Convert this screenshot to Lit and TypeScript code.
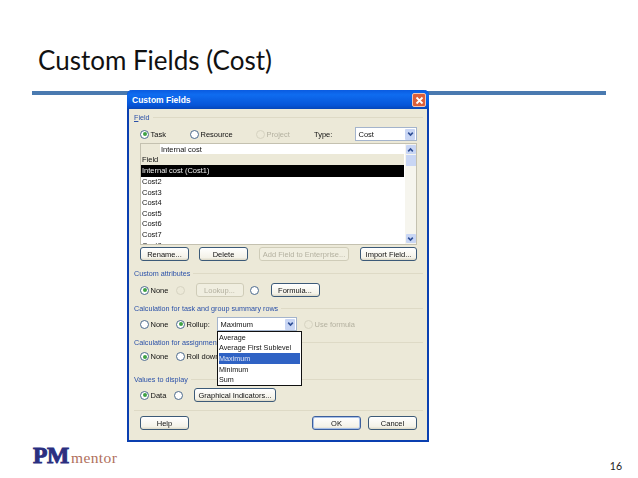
import { LitElement, html, css, svg } from "lit";
import { customElement } from "lit/decorators.js";

const radio = (on = false, off = false) => html`<span class="radio ${off ? "off" : ""}">${on ? html`<i></i>` : ""}</span>`;
const chev = svg`<svg width="7" height="6" viewBox="0 0 7 6"><path d="M1.2 1.6 3.5 4 5.8 1.6" fill="none" stroke="#2f4f96" stroke-width="1.6"/></svg>`;
const chevUp = svg`<svg width="7" height="6" viewBox="0 0 7 6"><path d="M1.2 4.4 3.5 2 5.8 4.4" fill="none" stroke="#2f4f96" stroke-width="1.6"/></svg>`;

@customElement("app-root")
export class AppRoot extends LitElement {
  static styles = css`
    :host { display: block; width: 638px; height: 478px; background: #fff; overflow: hidden; font-family: "Liberation Sans", Arial, sans-serif; }
    .slide { width: 638px; height: 478px; display: flex; flex-direction: column; }
    .title { margin: 44px 0 0 38px; height: 32px; font: 26px/32px Lato, sans-serif; color: #111; white-space: nowrap; }
    .rule { margin: 15px 0 0 32px; width: 574px; height: 4px; background: #4a7ab0; flex: none; }
    .dlg { margin: -5px 0 0 127px; width: 302px; height: 352px; box-sizing: border-box; flex: none; background: #ece9d8; border: 2px solid #0a3fb0; border-top: 0; border-radius: 5px 5px 0 0; display: flex; flex-direction: column; font-size: 7.5px; color: #111; filter: blur(.3px); position: relative; }
    .bar { height: 19px; margin: 0 -2px; flex: none; border-radius: 5px 5px 0 0; background: linear-gradient(#0a5be0, #0f6cf0 25%, #0655d8 80%, #0646b8); display: flex; align-items: center; justify-content: space-between; padding: 1px 3px 0 5px; box-sizing: border-box; color: #fff; font: bold 8.5px "Liberation Sans", sans-serif; }
    .x { width: 14px; height: 14px; border-radius: 2px; border: 1px solid #f0c8b8; box-sizing: border-box; background: #dd5f3a; display: flex; align-items: center; justify-content: center; }
    .body { flex: 1; padding: 0 10px 0 5px; position: relative; display: flex; flex-direction: column; }
    .sec { height: 10px; display: flex; align-items: center; gap: 3px; color: #2a50a8; white-space: nowrap; flex: none; font-size: 7.2px; }
    .sec::after { content: ""; flex: 1; height: 1px; background: #dedac6; margin-right: -6px; }
    .row { display: flex; align-items: center; flex: none; position: relative; white-space: nowrap; }
    .radio { width: 9px; height: 9px; flex: none; border: 1px solid #4c6a8c; border-radius: 50%; background: #fff; display: flex; align-items: center; justify-content: center; margin-right: 1.5px; box-sizing: border-box; }
    .radio i { width: 4px; height: 4px; border-radius: 50%; background: #3fa244; }
    .radio.off { border-color: #d5d2c0; background: transparent; }
    .dis { color: #b4b1a0; }
    .btn { box-sizing: border-box; height: 14px; flex: none; border: 1px solid #3c5a78; border-radius: 3px; background: linear-gradient(#fff, #f4f2e8 80%, #dcd8c6); display: flex; align-items: center; justify-content: center; color: #111; white-space: nowrap; }
    .btn.dis { border-color: #cfccb8; color: #b4b1a0; background: #f0eee0; }
    .btn.def { border-color: #3c5f9c; box-shadow: inset 0 0 0 1px #a8c0e8; }
    .combo { box-sizing: border-box; flex: none; height: 14px; border: 1px solid #a4b4cc; background: #fff; display: flex; align-items: center; justify-content: space-between; padding: 0 1px 0 2.5px; }
    .arrow { width: 10px; height: 11px; background: #c9d6f4; border-radius: 1px; display: flex; align-items: center; justify-content: center; }
    .grid { margin-left: 6px; width: 277px; height: 102px; flex: none; display: flex; background: #fff; border: 1px solid #c4c1b0; box-sizing: border-box; overflow: hidden; }
    .cols { flex: 1; display: flex; flex-direction: column; min-width: 0; }
    .edit { height: 10px; flex: none; display: flex; align-items: center; }
    .edit b { width: 19px; height: 10px; background: #ece9d8; margin-right: 1px; }
    .hd { height: 11px; flex: none; background: #ece9d8; display: flex; align-items: center; padding-left: 1px; }
    .it { height: 10.55px; flex: none; display: flex; align-items: center; padding-left: 1px; }
    .it.sel { background: #000; color: #eee; height: 11.5px; }
    .sb { width: 11px; flex: none; margin-left: 1px; background: #f6f5ee; display: flex; flex-direction: column; align-items: center; justify-content: space-between; padding: 1px 0; box-sizing: border-box; position: relative; }
    .sb .arrow { height: 9px; }
    .thumb { position: absolute; top: 11px; left: .5px; width: 10px; height: 11px; background: #c9d6f4; }
    .pop { position: absolute; left: 88px; top: 222px; width: 85px; height: 55px; box-sizing: border-box; background: #fff; border: 1px solid #111; padding: 0 1px; z-index: 2; font-size: 7.2px; }
    .pop div { height: 10.6px; display: flex; align-items: center; white-space: nowrap; }
    .pop .sel { background: #2f62c4; color: #dfe6f5; }
    .foot { flex: 1; display: flex; align-items: flex-start; justify-content: space-between; padding: 0 16px 0 33px; }
    .logo { margin-top: 1px; height: 24px; display: flex; align-items: baseline; white-space: nowrap; font-family: "Liberation Serif", serif; }
    .logo b { font-size: 23.5px; line-height: 24px; color: #2b2f80; -webkit-text-stroke: 1px #2b2f80; letter-spacing: -.3px; }
    .logo span { font-size: 15.5px; color: #b0705c; letter-spacing: .4px; margin-left: 2px; }
    .num { margin-top: 18px; font: 10.5px/12px Lato, sans-serif; color: #222; }
  `;

  private b(w: number, t: string, ml = 0, cls = "") {
    return html`<span class="btn ${cls}" style="width:${w}px;margin-left:${ml}px">${t}</span>`;
  }
  private lbl(w: number, t: string, cls = "") {
    return html`<span class=${cls} style="width:${w}px">${t}</span>`;
  }
  private gap(h: number) { return html`<div style="height:${h}px;flex:none"></div>`; }

  render() {
    const items = ["Cost2", "Cost3", "Cost4", "Cost5", "Cost6", "Cost7", "Cost8"];
    const opts = ["Average", "Average First Sublevel", "Maximum", "Minimum", "Sum"];
    return html`<div class="slide">
      <div class="title">Custom Fields (Cost)</div>
      <div class="rule"></div>
      <div class="dlg">
        <div class="bar"><span>Custom Fields</span>
          <span class="x"><svg width="9" height="9" viewBox="0 0 9 9"><path d="M1.5 1.5 7.5 7.5M7.5 1.5 1.5 7.5" stroke="#fff" stroke-width="1.8"/></svg></span></div>
        <div class="body">
          ${this.gap(3)}
          <div class="sec"><span><u>F</u>ield</span></div>
          ${this.gap(5)}
          <div class="row" style="height:14px;padding-left:6px">
            ${radio(true)}${this.lbl(39.5, "Task")}
            ${radio()}${this.lbl(55.5, "Resource")}
            ${radio(false, true)}${this.lbl(47.5, "Project", "dis")}
            ${this.lbl(41, "Type:")}
            <span class="combo" style="width:62px"><span>Cost</span><span class="arrow">${chev}</span></span>
          </div>
          ${this.gap(2)}
          <div class="grid">
            <div class="cols">
              <div class="edit"><b></b><span>Internal cost</span></div>
              <div class="hd">Field</div>
              <div class="it sel">Internal cost (Cost1)</div>
              ${items.map((i) => html`<div class="it">${i}</div>`)}
            </div>
            <div class="sb"><span class="arrow">${chevUp}</span><span class="thumb"></span><span class="arrow">${chev}</span></div>
          </div>
          ${this.gap(2)}
          <div class="row" style="height:14px">
            ${this.b(49, "Rename...", 6)}${this.b(49, "Delete", 10)}${this.b(90, "Add Field to Enterprise...", 11, "dis")}${this.b(57, "Import Field...", 11)}
          </div>
          ${this.gap(7)}
          <div class="sec">Custom attributes</div>
          ${this.gap(5)}
          <div class="row" style="height:14px;padding-left:6px">
            ${radio(true)}${this.lbl(25.5, "None")}${radio(false, true)}
            ${this.b(48, "Lookup...", 9, "dis")}
            <span style="width:6.5px"></span>${radio()}${this.b(49, "Formula...", 10)}
          </div>
          ${this.gap(6)}
          <div class="sec">Calculation for task and group summary rows</div>
          ${this.gap(4)}
          <div class="row" style="height:14px;padding-left:6px">
            ${radio()}${this.lbl(25.5, "None")}${radio(true)}${this.lbl(30.5, "Rollup:")}
            <span class="combo" style="width:80px"><span>Maximum</span><span class="arrow">${chev}</span></span>
            <span style="width:7px"></span>${radio(false, true)}<span class="dis">Use formula</span>
          </div>
          ${this.gap(6)}
          <div class="sec">Calculation for assignment rows</div>
          ${this.gap(4)}
          <div class="row" style="height:11px;padding-left:6px">
            ${radio(true)}${this.lbl(25.5, "None")}${radio()}<span>Roll down</span>
          </div>
          ${this.gap(12)}
          <div class="sec">Values to display</div>
          ${this.gap(4)}
          <div class="row" style="height:14px;padding-left:6px">
            ${radio(true)}${this.lbl(23.5, "Data")}${radio()}${this.b(82, "Graphical Indicators...", 9.5)}
          </div>
          ${this.gap(7.5)}
          <div style="height:1px;background:#dedac6;flex:none;margin-right:-6px"></div>
          ${this.gap(5.5)}
          <div class="row" style="height:14px">
            ${this.b(49, "Help", 6)}${this.b(49, "OK", 123, "def")}${this.b(49, "Cancel", 7)}
          </div>
          <div class="pop">${opts.map((o) => html`<div class=${o === "Maximum" ? "sel" : ""}>${o}</div>`)}</div>
        </div>
      </div>
      <div class="foot">
        <div class="logo"><b>PM</b><span>mentor</span></div>
        <div class="num">16</div>
      </div>
    </div>`;
  }
}
